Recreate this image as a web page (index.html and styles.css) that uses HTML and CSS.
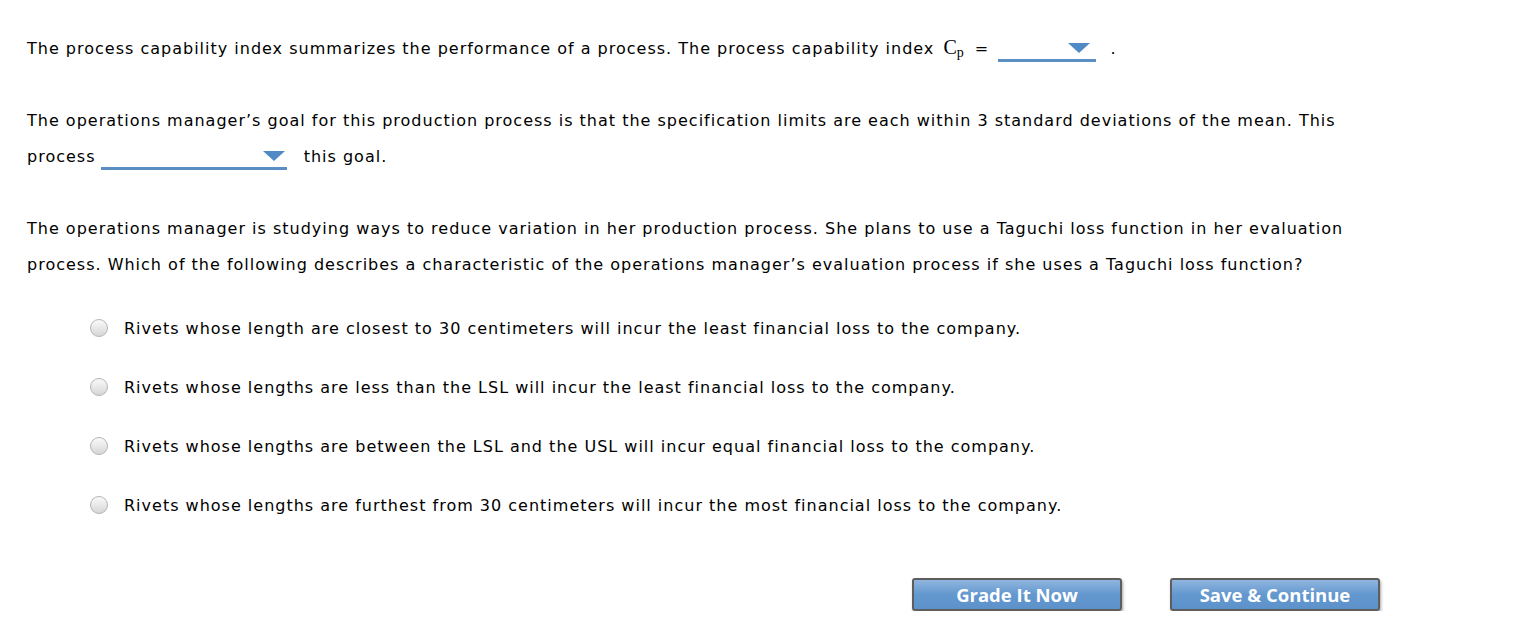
FILE: index.html
```html
<!DOCTYPE html>
<html>
<head>
<meta charset="utf-8">
<link rel="stylesheet" href="styles.css">
</head>
<body>
<div class="page">
  <p class="q q1">The process capability index summarizes the performance of a process. The process capability index <span class="math">C<sub>p</sub></span> = <span class="dd dd-short"><span class="tri"></span></span> .</p>
  <p class="q q2">The operations manager’s goal for this production process is that the specification limits are each within 3 standard deviations of the mean. This process <span class="dd dd-long"><span class="tri"></span></span> this goal.</p>
  <p class="q q3">The operations manager is studying ways to reduce variation in her production process. She plans to use a Taguchi loss function in her evaluation process. Which of the following describes a characteristic of the operations manager’s evaluation process if she uses a Taguchi loss function?</p>
  <ul class="options">
    <li><span class="radio"></span><span>Rivets whose length are closest to 30 centimeters will incur the least financial loss to the company.</span></li>
    <li><span class="radio"></span><span>Rivets whose lengths are less than the LSL will incur the least financial loss to the company.</span></li>
    <li><span class="radio"></span><span>Rivets whose lengths are between the LSL and the USL will incur equal financial loss to the company.</span></li>
    <li><span class="radio"></span><span>Rivets whose lengths are furthest from 30 centimeters will incur the most financial loss to the company.</span></li>
  </ul>
  <div class="buttons">
    <button class="btn">Grade It Now</button>
    <button class="btn">Save &amp; Continue</button>
  </div>
</div>
</body>
</html>
```
FILE: styles.css
```css
html, body { margin: 0; padding: 0; background: #fff; }
body { font-family: "DejaVu Sans", Verdana, sans-serif; font-size: 16px; letter-spacing: 1px; color: #000; }
.page { padding: 0 0 0 27px; width: 1335px; }
.q { margin: 0; line-height: 36px; }
.q1 { padding-top: 29px; }
.q2 { margin-top: 32px; }
.q3 { margin-top: 36px; }
.math { font-family: "Liberation Serif", "Times New Roman", serif; font-size: 20px; letter-spacing: 0; margin-left: 3px; margin-right: 5px; }
.math sub { font-size: 14px; vertical-align: -3px; }
.dd { display: inline-block; position: relative; height: 22px; border-bottom: 3px solid #5b8fc4; vertical-align: -8px; margin: 0 4px; }
.dd-short { width: 98px; margin-left: 3px; margin-right: 8px; }
.dd-long { width: 186px; margin-left: -1px; margin-right: 11px; }
.tri { position: absolute; top: 6px; width: 0; height: 0; border-left: 11px solid transparent; border-right: 11px solid transparent; border-top: 10px solid #4f8ac6; }
.dd-short .tri { right: 6px; }
.dd-long .tri { right: 2px; }
.options { list-style: none; margin: 16px 0 0 0; padding: 0 0 0 63px; }
.options li { display: flex; align-items: center; height: 59px; }
.radio { display: inline-block; flex: none; width: 18px; height: 18px; border-radius: 50%; border: 1px solid #b5b5b5; background: linear-gradient(#fafafa, #d6d6d6); margin-right: 16px; box-sizing: border-box; position: relative; top: -1px; }
.buttons { display: flex; gap: 48px; margin: 43px 0 0 885px; width: 500px; }
.btn { flex: none; box-sizing: border-box; width: 210px; height: 33px; font-family: "Open Sans", sans-serif; font-weight: 700; font-size: 18.5px; color: #fff; background: linear-gradient(#90b5de, #6398cf 50%, #5c91ca); border: 2px solid #5e5e5e; border-radius: 3px; box-shadow: 1px 2px 3px rgba(0,0,0,0.35); padding: 0; letter-spacing: 0; }
```
